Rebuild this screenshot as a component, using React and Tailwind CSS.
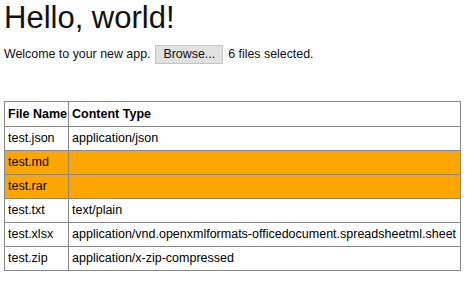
import React from 'react';

const files = [
  { name: 'test.json', type: 'application/json' },
  { name: 'test.md', type: '' },
  { name: 'test.rar', type: '' },
  { name: 'test.txt', type: 'text/plain' },
  { name: 'test.xlsx', type: 'application/vnd.openxmlformats-officedocument.spreadsheetml.sheet' },
  { name: 'test.zip', type: 'application/x-zip-compressed' },
];

const App = () => {
  return (
    <div className="px-1 text-[12.4px] text-black font-['Liberation_Sans',Arial,sans-serif]">
      <h1 className="text-[31px] leading-[36px] m-0 font-normal text-[#111]">Hello, world!</h1>
      <div className="flex items-center mt-[8px] h-[20px] text-[#111]">
        <span>Welcome to your new app.</span>
        <button className="ml-[5px] px-[7px] h-[19px] leading-[17px] bg-[#e1e1e1] border border-[#c4c4c4]">Browse...</button>
        <span className="ml-[5px]">6 files selected.</span>
      </div>
      <table className="mt-[37px] border-collapse border border-[#888] whitespace-nowrap text-[12.5px]">
        <thead>
          <tr className="h-[25px]">
            <th className="border border-[#888] pl-[3px] pr-[1px] text-left font-bold">File Name</th>
            <th className="border border-[#888] pl-[3px] pr-[4px] text-left font-bold">Content Type</th>
          </tr>
        </thead>
        <tbody>
          {files.map((f) => (
            <tr key={f.name} className={`h-[24px] ${f.type ? '' : 'bg-[#ffa500]'}`}>
              <td className="border border-[#888] pl-[3px] pr-[1px]">{f.name}</td>
              <td className="border border-[#888] pl-[3px] pr-[4px]">{f.type}</td>
            </tr>
          ))}
        </tbody>
      </table>
    </div>
  );
};

export default App;
